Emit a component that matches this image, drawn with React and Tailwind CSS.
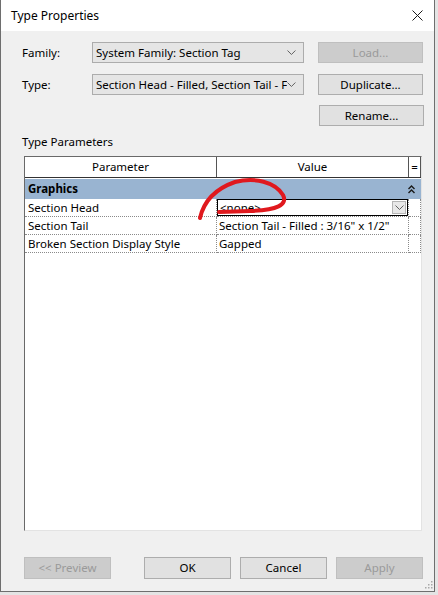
import React from "react";

const font = { fontFamily: '"Noto Sans", "Open Sans", Arial, sans-serif' };

function Chevron({ className }) {
  return (
    <svg width="9" height="6" viewBox="0 0 9 6" className={className}>
      <path d="M0.5 0.5 L4.5 4.5 L8.5 0.5" fill="none" stroke="#606060" strokeWidth="1" />
    </svg>
  );
}

function Combo({ text }) {
  return (
    <div className="flex items-center justify-between w-[212px] h-[21px] border border-[#acacac] bg-[#e5e5e5] pl-[3px] pr-[7px]">
      <span className="whitespace-nowrap overflow-hidden text-[11.5px] text-black leading-[15px] w-[193px]">{text}</span>
      <Chevron />
    </div>
  );
}

function Button({ children, disabled }) {
  return (
    <div
      className={
        disabled
          ? "flex items-center justify-center w-[105px] h-[21px] border border-[#bfbfbf] bg-[#cccccc] text-[11.5px] text-[#9a9a9a]"
          : "flex items-center justify-center w-[105px] h-[21px] border border-[#adadad] bg-[#e1e1e1] text-[11.5px] text-black"
      }
    >
      {children}
    </div>
  );
}

function BottomButton({ children, disabled }) {
  return (
    <div
      className={
        disabled
          ? "flex items-center justify-center w-[87px] h-[22px] border border-[#bfbfbf] bg-[#cccccc] text-[11.5px] text-[#9a9a9a]"
          : "flex items-center justify-center w-[87px] h-[22px] border border-[#adadad] bg-[#e1e1e1] text-[11.5px] text-black"
      }
    >
      {children}
    </div>
  );
}

function Row({ name, children }) {
  return (
    <div className="flex h-[18px] text-[11.5px] leading-none">
      <div className="flex items-center w-[192px] pl-[3px] border-r border-b border-dotted border-[#8a8a8a]">{name}</div>
      <div className="flex items-center w-[192px] border-r border-b border-dotted border-[#8a8a8a]">{children}</div>
      <div className="w-[12px] border-r border-b border-dotted border-[#8a8a8a]"></div>
    </div>
  );
}

export default function App() {
  return (
    <div className="relative w-[438px] h-[595px] bg-[#e4e4e4] overflow-hidden" style={font}>
      <div className="flex flex-col w-[435px] h-[592px] border-l border-r border-b border-[#6e6e6e] bg-[#f0f0f0]">
        {/* title bar */}
        <div className="flex items-center justify-between h-[31px] bg-white pl-[10px] pr-[11px]">
          <span className="text-[12px] text-black">Type Properties</span>
          <svg width="11" height="11" viewBox="0 0 11 11">
            <path d="M0.5 0.5 L10.5 10.5 M10.5 0.5 L0.5 10.5" stroke="#1a1a1a" strokeWidth="1" />
          </svg>
        </div>

        <div className="flex flex-col pl-[21px] pr-[10px]">
          <div className="flex items-center mt-[11px]">
            <span className="w-[70px] text-[11.5px]">Family:</span>
            <Combo text="System Family: Section Tag" />
            <div className="ml-[14px]">
              <Button disabled>Load...</Button>
            </div>
          </div>
          <div className="flex items-center mt-[11px]">
            <span className="w-[70px] text-[11.5px]">Type:</span>
            <Combo text="Section Head - Filled, Section Tail - Filled" />
            <div className="ml-[14px]">
              <Button>Duplicate...</Button>
            </div>
          </div>
          <div className="flex justify-end mt-[10px] pr-[0px]">
            <Button>Rename...</Button>
          </div>

          <div className="mt-[9px] text-[11.5px] leading-[14px]">Type Parameters</div>

          {/* table */}
          <div className="flex flex-col mt-[7px] ml-[2px] w-[398px] h-[375px] bg-white border-t border-l border-[#696969] border-r border-b border-r-[#e3e3e3] border-b-[#e3e3e3]">
            <div className="flex h-[21px] text-[11.5px] border-b border-[#333333]">
              <div className="flex items-center justify-center w-[192px] border-r border-[#555555]">Parameter</div>
              <div className="flex items-center justify-center w-[192px] border-r border-[#555555]">Value</div>
              <div className="flex items-center justify-center w-[12px] border-r border-[#555555]">=</div>
            </div>
            <div className="flex items-center justify-between h-[20px] w-[396px] bg-[#99b4d1] mt-[1px] pl-[3px] pr-[6px] text-[11.5px] font-bold">
              <span>Graphics</span>
              <svg width="7" height="9" viewBox="0 0 7 9">
                <path d="M0.5 4 L3.5 1 L6.5 4 M0.5 8 L3.5 5 L6.5 8" fill="none" stroke="#1a1a1a" strokeWidth="1.4" />
              </svg>
            </div>
            <Row name="Section Head">
              <div className="flex items-center justify-between w-[191px] h-[17px] border border-black bg-white pl-[2px] pr-[1px]">
                <span>&lt;none&gt;</span>
                <div className="flex items-center justify-center w-[14px] h-[13px] border border-[#b5b5b5] bg-[#e8e8e8]">
                  <Chevron />
                </div>
              </div>
            </Row>
            <Row name="Section Tail">
              <span className="pl-[2px] whitespace-nowrap">Section Tail - Filled : 3/16" x 1/2"</span>
            </Row>
            <Row name="Broken Section Display Style">
              <span className="pl-[2px]">Gapped</span>
            </Row>
          </div>

          {/* bottom buttons */}
          <div className="flex items-center mt-[26px] ml-[2px]">
            <BottomButton disabled>&lt;&lt; Preview</BottomButton>
            <div className="ml-[33px]">
              <BottomButton>OK</BottomButton>
            </div>
            <div className="ml-[9px]">
              <BottomButton>Cancel</BottomButton>
            </div>
            <div className="ml-[9px]">
              <BottomButton disabled>Apply</BottomButton>
            </div>
          </div>
        </div>
      </div>

      {/* size grip */}
      <svg className="absolute left-[424px] top-[580px]" width="9" height="9" viewBox="0 0 9 9">
        <g fill="#a8a8a8">
          <rect x="7" y="1" width="1.5" height="1.5" />
          <rect x="4" y="4" width="1.5" height="1.5" />
          <rect x="7" y="4" width="1.5" height="1.5" />
          <rect x="1" y="7" width="1.5" height="1.5" />
          <rect x="4" y="7" width="1.5" height="1.5" />
          <rect x="7" y="7" width="1.5" height="1.5" />
        </g>
      </svg>

      {/* red annotation circle */}
      <svg className="absolute left-0 top-0 pointer-events-none" width="438" height="595" viewBox="0 0 438 595">
        <path
          d="M200 218 C203 205, 212 190, 235 182 C255 177, 275 182, 283 195 C288 205, 277 210, 250 211 L219 212"
          fill="none"
          stroke="#e0191e"
          strokeWidth="4"
          strokeLinecap="round"
        />
      </svg>
    </div>
  );
}
